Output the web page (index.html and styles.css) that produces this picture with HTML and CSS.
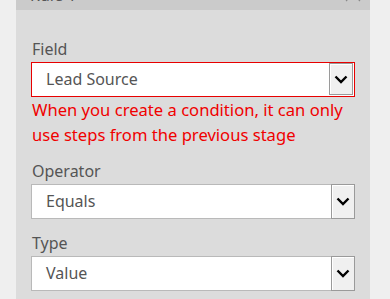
FILE: index.html
```html
<!DOCTYPE html>
<html>
<head>
<meta charset="utf-8">
<link rel="stylesheet" href="styles.css">
</head>
<body>
<div class="panel">
  <div class="header">
    <span class="title">Rule 1</span>
    <svg class="collapse" width="18" height="10" viewBox="0 0 18 10"><path d="M2 1 L9 -6 L16 1" fill="none" stroke="#8a8a8a" stroke-width="1.2"/></svg>
  </div>
  <div class="form">
    <div class="group">
      <div class="label">Field</div>
      <div class="select error-border">
        <span class="value">Lead Source</span>
        <span class="btn"><svg width="14" height="9" viewBox="0 0 14 9"><path d="M1.5 1.5 L7 7 L12.5 1.5" fill="none" stroke="#000" stroke-width="2.4"/></svg></span>
      </div>
      <div class="error">When you create a condition, it can only use steps from the previous stage</div>
    </div>
    <div class="group">
      <div class="label">Operator</div>
      <div class="select">
        <span class="value">Equals</span>
        <span class="btn"><svg width="14" height="9" viewBox="0 0 14 9"><path d="M1.5 1.5 L7 7 L12.5 1.5" fill="none" stroke="#000" stroke-width="2.4"/></svg></span>
      </div>
    </div>
    <div class="group">
      <div class="label">Type</div>
      <div class="select">
        <span class="value">Value</span>
        <span class="btn"><svg width="14" height="9" viewBox="0 0 14 9"><path d="M1.5 1.5 L7 7 L12.5 1.5" fill="none" stroke="#000" stroke-width="2.4"/></svg></span>
      </div>
    </div>
  </div>
</div>
</body>
</html>
```
FILE: styles.css
```css
html, body {
  margin: 0;
  padding: 0;
  background: #efefef;
  font-family: "Noto Sans", "Open Sans", sans-serif;
  overflow: hidden;
}
.panel {
  margin-left: 16px;
  width: 354px;
  height: 299px;
  background: #dcdcdc;
}
.header {
  height: 10px;
  background: #cbcbcb;
  overflow: hidden;
  display: flex;
  justify-content: space-between;
  align-items: flex-end;
  padding: 0 8px 0 14px;
  box-sizing: border-box;
}
.title {
  font-size: 16px;
  line-height: 20px;
  color: #555;
  margin-bottom: 5px;
}
.collapse {
  display: block;
  margin-bottom: 0;
}
.form {
  padding: 28px 15px 0 15px;
}
.group {
  margin-bottom: 13px;
}
.label {
  font-size: 16px;
  line-height: 22px;
  color: #555;
  padding-left: 1px;
  margin-bottom: 2px;
}
.select {
  display: flex;
  height: 35px;
  box-sizing: border-box;
  border: 1px solid #b9b9b9;
  background: #fff;
}
.select.error-border {
  border-color: #e80000;
}
.value {
  flex: 1;
  font-size: 16px;
  line-height: 33px;
  color: #555;
  padding-left: 14px;
}
.btn {
  width: 24px;
  box-sizing: border-box;
  border: 1px solid #9a9a9a;
  box-shadow: inset 1px 1px 0 #fff;
  background: #f0f0f0;
  display: flex;
  align-items: center;
  justify-content: center;
  margin: -1px -1px -1px 0;
}
.error-border .btn {
  margin: 0 1px 1px 0;
}
.error {
  font-size: 16.6px;
  line-height: 25px;
  color: #f00000;
  padding-left: 1px;
  margin-bottom: 8px;
}
```
